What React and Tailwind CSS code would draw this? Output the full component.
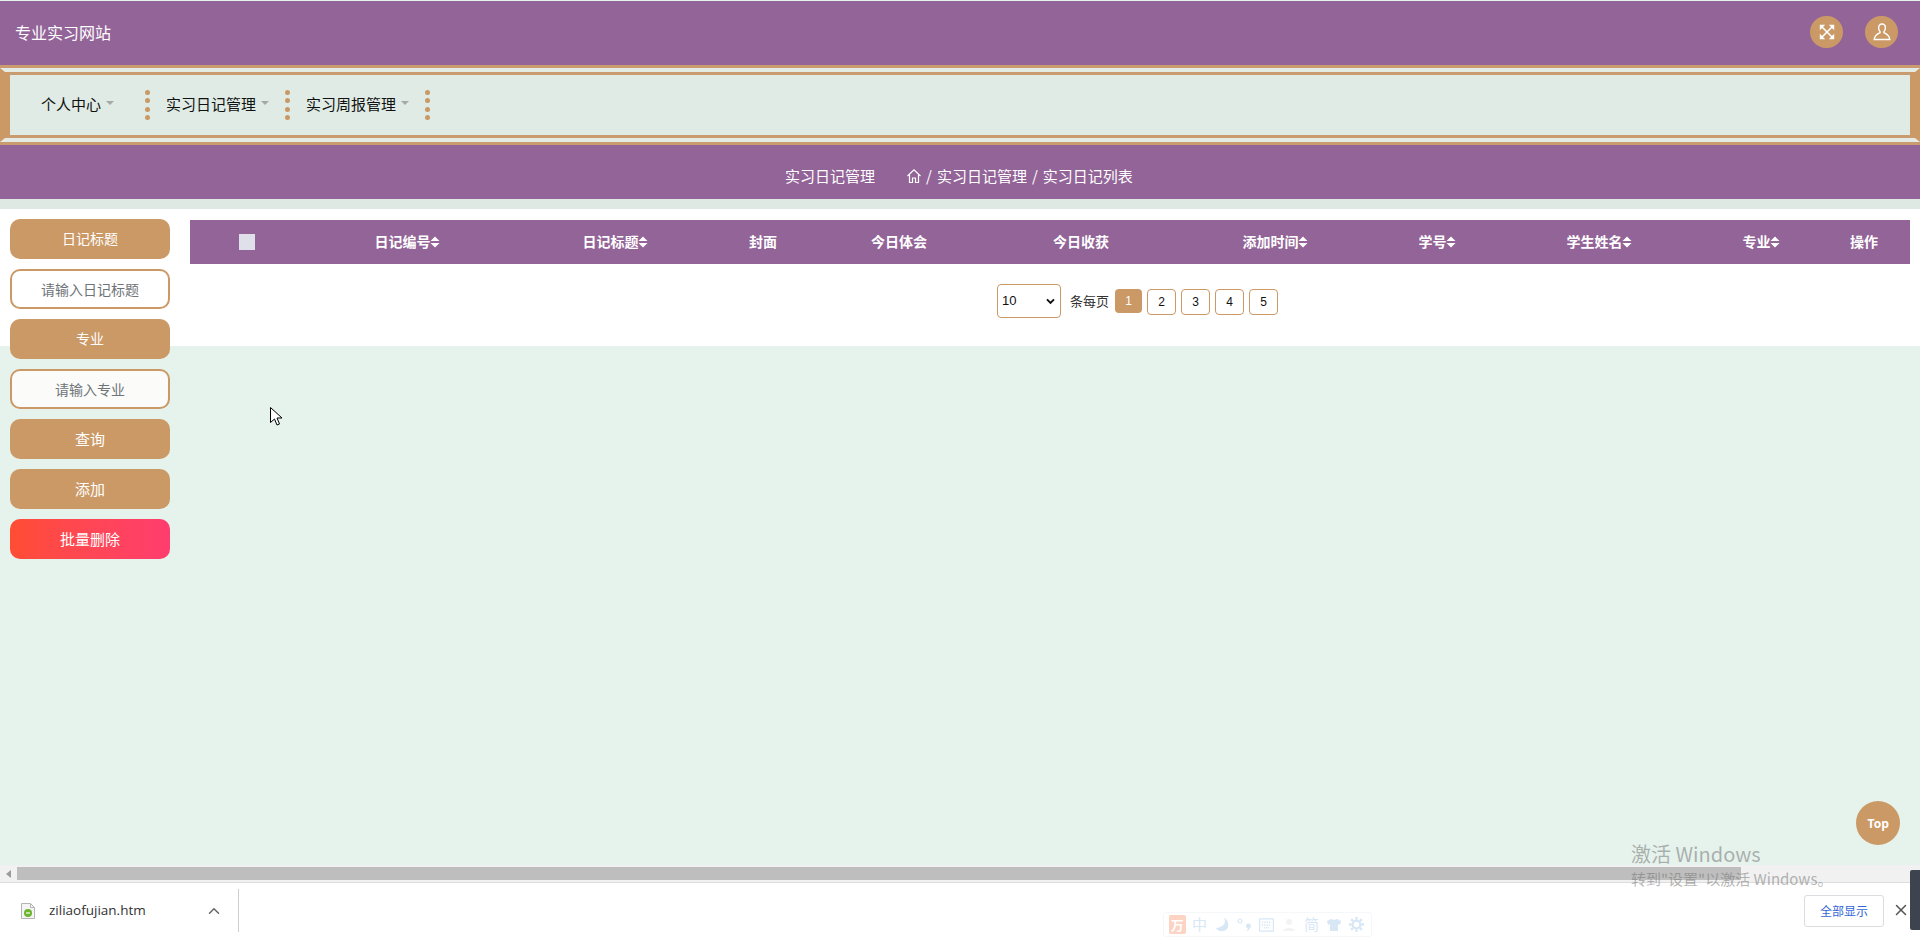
import { ChevronUp, X } from "lucide-react";

const font = { fontFamily: '"Noto Sans CJK SC", "Liberation Sans", sans-serif' };

const columns = [
  { label: "", width: "w-[114px]", check: true },
  { label: "日记编号", width: "w-[208px] pr-[2px]", sort: true },
  { label: "日记标题", width: "w-[206px]", sort: true },
  { label: "封面", width: "w-[90px]" },
  { label: "今日体会", width: "w-[182px]" },
  { label: "今日收获", width: "w-[182px]" },
  { label: "添加时间", width: "w-[208px] pr-[2px]", sort: true },
  { label: "学号", width: "w-[114px]", sort: true },
  { label: "学生姓名", width: "w-[210px]", sort: true },
  { label: "专业", width: "w-[116px] pr-[2px]", sort: true },
  { label: "操作", width: "w-[88px]" },
];

function IconExpand() {
  return (
    <svg viewBox="0 0 20 20" className="h-[18px] w-[18px]" fill="none" stroke="white" strokeWidth="1.8">
      <path d="M4.5 4.5l11 11M15.5 4.5l-11 11" />
      <path d="M2 2h6L2 8zM18 2h-6l6 6zM18 18h-6l6-6zM2 18h6l-6-6z" fill="white" stroke="none" />
    </svg>
  );
}

function IconUser() {
  return (
    <svg viewBox="0 0 20 20" className="h-5 w-5" fill="none" stroke="white" strokeWidth="1.4">
      <path d="M10 2c-2.200 0-3.400 1.700-3.400 3.800 0 1.600.6 2.900 1.400 3.800.3.4.2 1-.3 1.200C5 12 2.600 13.400 2.200 17.500h15.600c-.4-4.100-2.800-5.500-5.500-6.700-.5-.2-.6-.8-.3-1.200.8-.9 1.400-2.200 1.400-3.800C13.400 3.700 12.200 2 10 2z" />
    </svg>
  );
}

function IconHome() {
  return (
    <svg viewBox="0 0 14 14" className="h-[14px] w-[14px]" fill="none" stroke="white" strokeWidth="1.200">
      <path d="M.5 7L7 .9 13.500 7" />
      <path d="M2.500 5.500v8h3V9h3v4.500h3v-8" />
    </svg>
  );
}

function SortIcon() {
  return (
    <svg viewBox="0 0 10 12" className="-ml-[1px] h-3 w-[10px]" fill="white">
      <path d="M5 0.500L9.500 5H0.500zM5 11.500L0.500 7H9.500z" />
    </svg>
  );
}

function Caret() {
  return <span className="ml-[5px] inline-block h-0 w-0 border-x-4 border-t-[4px] border-x-transparent border-t-[#a5aaa9] -translate-y-[1px]" />;
}

function NavItem({ label, className }) {
  return (
    <div className={`flex -translate-y-[1px] items-center ${className}`}>
      <span className="text-[15px] text-[#111]">{label}</span>
      <Caret />
    </div>
  );
}

function Dots({ className }) {
  return (
    <div className={`flex flex-col gap-[3.500px] ${className}`}>
      <span className="h-[5px] w-[5px] rounded-full bg-[#cb9966]" />
      <span className="h-[5px] w-[5px] rounded-full bg-[#cb9966]" />
      <span className="h-[5px] w-[5px] rounded-full bg-[#cb9966]" />
      <span className="h-[5px] w-[5px] rounded-full bg-[#cb9966]" />
    </div>
  );
}

function SideButton({ children, className }) {
  return (
    <div className={`flex h-10 items-center justify-center rounded-[10px] bg-[#cb9966] text-white ${className}`}>{children}</div>
  );
}

function SideInput({ placeholder, className }) {
  return (
    <div className={`flex h-10 items-center justify-center rounded-[10px] border-2 border-[#cb9966] text-[14px] text-[#6f7479] ${className}`}>
      {placeholder}
    </div>
  );
}

function PageButton({ children }) {
  return (
    <div className="flex h-[26px] w-[29px] items-center justify-center rounded-[4px] border border-[#cb9966] font-['Liberation_Sans'] text-[12px] text-[#111]">
      {children}
    </div>
  );
}

function ImeBar() {
  const slot = "flex w-[22.400px] shrink-0 items-center justify-center";
  return (
    <div className="absolute left-[1163px] top-[912px] flex h-[25px] w-[209px] items-center rounded-[3px] border border-[#f5f7f9] bg-white pl-[2px] text-[15px] text-[#d8e7f6]">
      <span className={slot}>
        <span className="flex h-[19px] w-[17px] items-center justify-center rounded-[2px] bg-[#fdd3c3] text-[13px] font-bold text-white">万</span>
      </span>
      <span className={slot}>中</span>
      <span className={slot}>
        <svg viewBox="0 0 14 16" className="h-4 w-[14px]" fill="#d8e7f6">
          <path d="M9 1c2 4 1 9-8 10 2 4 10 5 12-1 1-4-1-8-4-9z" />
        </svg>
      </span>
      <span className={slot}>
        <svg viewBox="0 0 14 14" className="h-[14px] w-[14px]" fill="#d8e7f6">
          <circle cx="3" cy="3" r="2" fill="none" stroke="#d8e7f6" strokeWidth="1.200" />
          <path d="M9 8a2.500 2.500 0 1 1 4 2c-.5 1.500-2 2.800-3.500 3 1-1 1.500-2 1-3-1 0-1.500-1-1.500-2z" />
        </svg>
      </span>
      <span className={slot}>
        <svg viewBox="0 0 16 14" className="h-[14px] w-[15px]" fill="none" stroke="#d8e7f6">
          <rect x=".5" y=".5" width="15" height="13" rx="1" strokeWidth="1.500" />
          <path d="M3 4h10M3 7h10M5 10h6" strokeWidth="1.500" strokeDasharray="1.500 1" />
        </svg>
      </span>
      <span className={slot}>
        <svg viewBox="0 0 14 14" className="h-[14px] w-[14px]" fill="#f1f3f5">
          <circle cx="7" cy="4" r="3" />
          <path d="M1 13c1-4 11-4 12 0z" />
        </svg>
      </span>
      <span className={slot}>简</span>
      <span className={slot}>
        <svg viewBox="0 0 14 14" className="h-[14px] w-[14px]" fill="#d8e7f6">
          <path d="M4 1l3 1 3-1 4 2-1 4-2-1v7H3V6L1 7 0 3z" />
        </svg>
      </span>
      <span className={slot}>
        <svg viewBox="0 0 14 14" className="h-[15px] w-[15px]" fill="none" stroke="#d8e7f6" strokeWidth="2.200">
          <circle cx="7" cy="7" r="3.600" />
          <path d="M7 0v2.500M7 11.500V14M0 7h2.500M11.500 7H14M2 2l1.800 1.800M10.200 10.200L12 12M12 2l-1.800 1.800M3.800 10.200L2 12" />
        </svg>
      </span>
    </div>
  );
}

export default function App() {
  return (
    <div className="relative flex h-[938px] w-[1920px] flex-col overflow-hidden bg-[#e6f2ec]" style={font}>
      <header className="mt-[1px] flex h-[64px] items-center justify-between bg-[#936498] pl-[15px] pr-[22px]">
        <span className="-translate-y-[1px] text-[16px] text-white">专业实习网站</span>
        <div className="flex -translate-y-[1px] gap-[22px]">
          <div className="flex h-8 w-[33px] items-center justify-center rounded-full bg-[#cb9966]">
            <IconExpand />
          </div>
          <div className="flex h-8 w-[33px] items-center justify-center rounded-full bg-[#cb9966]">
            <IconUser />
          </div>
        </div>
      </header>

      <div className="h-[80px] border-y-[3px] border-[#c99b6f]">
        <div className="h-full border-y-[4px] border-x-[5px] border-y-[#e4ebe4] border-x-[#cb9966]">
          <div className="flex h-full items-center border-y-[3px] border-x-[5px] border-y-[#c99b6f] border-x-[#cb9966] bg-[#dfebe4]">
            <NavItem label="个人中心" className="ml-[31px]" />
            <Dots className="ml-[31px]" />
            <NavItem label="实习日记管理" className="ml-[16px]" />
            <Dots className="ml-[16px]" />
            <NavItem label="实习周报管理" className="ml-[16px]" />
            <Dots className="ml-[16px]" />
          </div>
        </div>
      </div>

      <div className="flex h-[54px] items-center bg-[#936498] pl-[785px] pt-[8px] text-[15px] text-white">
        <span>实习日记管理</span>
        <span className="ml-[32px]">
          <IconHome />
        </span>
        <span className="ml-[5px]">/</span>
        <span className="ml-[5px]">实习日记管理</span>
        <span className="ml-[5px]">/</span>
        <span className="ml-[5px]">实习日记列表</span>
      </div>
      <div className="h-[10px] bg-[#dfe9e4]" />

      <main className="relative flex flex-1 gap-5 pl-[10px] pr-[10px]">
        <div className="absolute inset-x-0 top-0 h-[137px] bg-white" />
        <aside className="relative mt-[10px] flex w-[160px] flex-col gap-[10px]">
          <SideButton className="pb-[2px] text-[14px]">日记标题</SideButton>
          <SideInput placeholder="请输入日记标题" className="bg-white" />
          <SideButton className="pb-[2px] text-[14px]">专业</SideButton>
          <SideInput placeholder="请输入专业" className="bg-[#fbfcfa]" />
          <SideButton className="text-[15px]">查询</SideButton>
          <SideButton className="text-[15px]">添加</SideButton>
          <div className="flex h-10 items-center justify-center rounded-[10px] bg-gradient-to-r from-[#ff4d33] to-[#ff3d6e] text-[15px] text-white">
            批量删除
          </div>
        </aside>

        <section className="relative mt-[11px] flex-1">
          <div className="flex h-[44px] items-center bg-[#936498] text-white">
            {columns.map((col, i) => (
              <div key={i} className={`flex shrink-0 items-center justify-center pb-[1px] text-[14px] font-bold ${col.width}`}>
                {col.check && <span className="h-4 w-4 bg-[#dfe0ea]" />}
                {col.label}
                {col.sort && <SortIcon />}
              </div>
            ))}
          </div>
          <div className="ml-[807px] mt-5 flex items-center">
            <div className="relative flex h-[34px] w-[64px] items-center rounded-[4px] border border-[#cb9966] bg-white pl-[4px] font-['Liberation_Sans'] text-[13px] text-[#111]">
              10
              <svg viewBox="0 0 10 8" className="absolute right-[5px] top-[13px] h-[7px] w-[9px]" fill="none" stroke="#111" strokeWidth="2.200">
                <path d="M1 1.500l4 4 4-4" />
              </svg>
            </div>
            <span className="ml-[9px] text-[13px] text-[#333]">条每页</span>
            <div className="ml-[6px] flex h-[24px] w-[27px] items-center justify-center rounded-[4px] bg-[#cb9966] font-['Liberation_Sans'] text-[12px] text-white">
              1
            </div>
            <div className="ml-[5px] flex translate-y-[1px] gap-[5px]">
              <PageButton>2</PageButton>
              <PageButton>3</PageButton>
              <PageButton>4</PageButton>
              <PageButton>5</PageButton>
            </div>
          </div>
        </section>
      </main>

      <div className="flex h-[17px] bg-[#f1f1f1] pb-[2px] pt-[2px]">
        <div className="flex w-[17px] shrink-0 items-center justify-center">
          <span className="h-0 w-0 border-y-4 border-r-[5px] border-y-transparent border-r-[#9a9a9a]" />
        </div>
        <div className="w-[1724px] bg-[#bebebe]" />
      </div>

      <footer className="relative flex h-[56px] items-center border-t border-[#dcdcdc] bg-white">
        <svg viewBox="0 0 14 16" className="ml-[21px] h-4 w-[14px]">
          <path d="M.5.500h9l4 4v11H.5z" fill="#f4f4f4" stroke="#b5b5b5" />
          <path d="M9.500.500v4h4" fill="none" stroke="#b5b5b5" />
          <circle cx="7" cy="10" r="4" fill="#6cb52d" />
          <path d="M5 10h4" stroke="white" strokeWidth="1.200" />
        </svg>
        <span className="ml-[14px] text-[13.500px] text-[#333]" style={{ fontFamily: '"Open Sans", sans-serif' }}>
          ziliaofujian.htm
        </span>
        <ChevronUp className="ml-[59px] h-[18px] w-[18px] text-[#666]" strokeWidth={2} />
        <div className="ml-[15px] h-[43px] w-px bg-[#cfcfcf]" />
        <div className="ml-auto mr-[36px] flex h-[32px] w-[80px] items-center justify-center rounded-[3px] border border-[#dadce0] text-[12px] text-[#3367d6]">
          全部显示
        </div>
        <X className="absolute right-[10px] top-[18px] h-[18px] w-[18px] text-[#555]" strokeWidth={2} />
      </footer>

      {/* things sitting over the page */}
      <div className="absolute right-[20px] top-[801px] flex h-[44px] w-[44px] items-center justify-center rounded-full bg-[#cb9966] text-[12px] font-bold text-white">
        Top
      </div>
      <div className="pointer-events-none absolute left-[1631px] top-[839px] text-[#6d6d6d]/50">
        <div className="text-[20px] leading-[30px]">激活 Windows</div>
        <div className="text-[15px] leading-[19px]">转到"设置"以激活 Windows。</div>
      </div>
      <svg viewBox="0 0 12 19" className="absolute left-[270px] top-[407px] h-[19px] w-[12px]" fill="white" stroke="black" strokeWidth="1">
        <path d="M.5.500v15l4-3.500 2.500 6 2.500-1-2.500-6h5z" />
      </svg>
      <div className="absolute left-[1910px] top-[870px] h-[60px] w-[10px] rounded-l-[2px] bg-[#3d4450]" />
      <ImeBar />
    </div>
  );
}
